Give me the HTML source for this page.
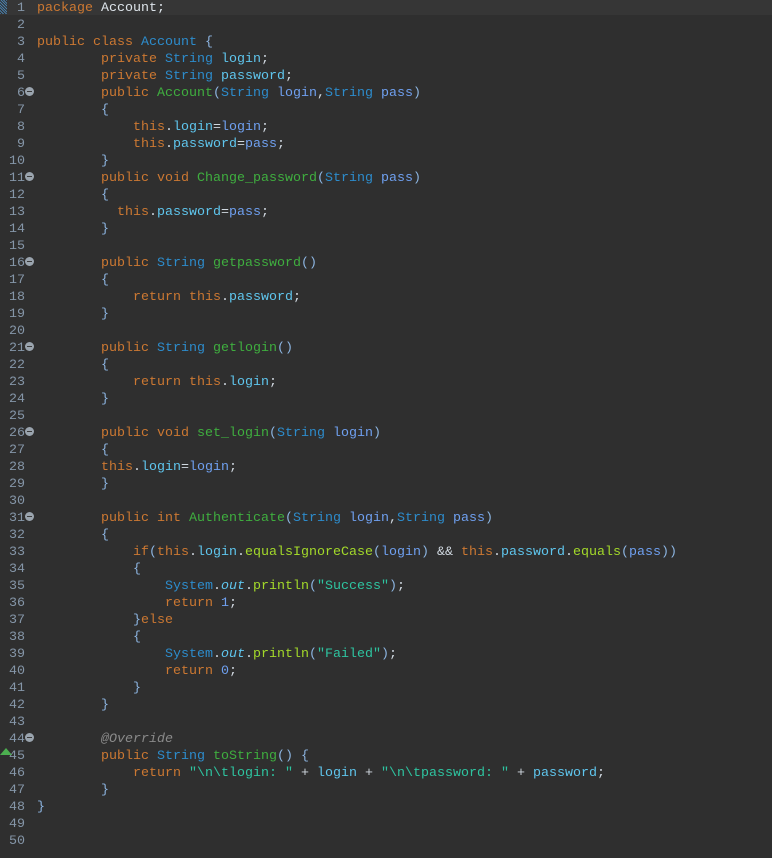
<!DOCTYPE html>
<html><head><meta charset="utf-8"><style>
html,body{margin:0;padding:0;background:#2f2f2f;width:772px;height:858px;overflow:hidden}
.hl{position:absolute;left:0;top:0;width:772px;height:15px;background:#363636}
pre{position:absolute;margin:0;top:0;font-family:"Liberation Mono",monospace;font-size:13.33px;line-height:17px;}
#nums{left:0;width:25px;text-align:right;color:#8596a8}
#code{left:37px;color:#d0d8e0}
.k{color:#cc7832}.t{color:#2d8ccc}.f{color:#5fc6ee}.m{color:#3fae3f}.c{color:#a3d92a}.s{color:#2ec4a0}.v{color:#6fa0f0}.p{color:#8cb4e0}.a{color:#8a8a8a;font-style:italic}.w{color:#dde4ea}.o{font-style:italic;color:#5fc6ee}
.fold{position:absolute;left:25px;width:9px;height:9px;border-radius:50%;background:#9aa4ae}
.fold:after{content:"";position:absolute;left:2px;top:4px;width:5px;height:1px;background:#3a3a3a}
.mk{position:absolute;left:0;top:748px;width:0;height:0;border-left:6px solid transparent;border-right:6px solid transparent;border-bottom:7px solid #4caf50}
.sq{position:absolute;left:0;top:0;width:7px;height:14px;background:repeating-linear-gradient(45deg,#4a7ea8 0 1px,#2f2f2f 1px 2px)}
</style></head><body>
<div class="hl"></div><div class="sq"></div>
<pre id="nums">1
2
3
4
5
6
7
8
9
10
11
12
13
14
15
16
17
18
19
20
21
22
23
24
25
26
27
28
29
30
31
32
33
34
35
36
37
38
39
40
41
42
43
44
45
46
47
48
49
50</pre>
<div class="fold" style="top:87px"></div>
<div class="fold" style="top:172px"></div>
<div class="fold" style="top:257px"></div>
<div class="fold" style="top:342px"></div>
<div class="fold" style="top:427px"></div>
<div class="fold" style="top:512px"></div>
<div class="fold" style="top:733px"></div>
<div class="mk"></div>
<pre id="code"><span class="k">package</span> <span class="w">Account;</span>

<span class="k">public</span> <span class="k">class</span> <span class="t">Account</span> <span class="p">{</span>
        <span class="k">private</span> <span class="t">String</span> <span class="f">login</span>;
        <span class="k">private</span> <span class="t">String</span> <span class="f">password</span>;
        <span class="k">public</span> <span class="m">Account</span><span class="p">(</span><span class="t">String</span> <span class="v">login</span>,<span class="t">String</span> <span class="v">pass</span><span class="p">)</span>
        <span class="p">{</span>
            <span class="k">this</span>.<span class="f">login</span>=<span class="v">login</span>;
            <span class="k">this</span>.<span class="f">password</span>=<span class="v">pass</span>;
        <span class="p">}</span>
        <span class="k">public</span> <span class="k">void</span> <span class="m">Change_password</span><span class="p">(</span><span class="t">String</span> <span class="v">pass</span><span class="p">)</span>
        <span class="p">{</span>
          <span class="k">this</span>.<span class="f">password</span>=<span class="v">pass</span>;
        <span class="p">}</span>

        <span class="k">public</span> <span class="t">String</span> <span class="m">getpassword</span><span class="p">()</span>
        <span class="p">{</span>
            <span class="k">return</span> <span class="k">this</span>.<span class="f">password</span>;
        <span class="p">}</span>

        <span class="k">public</span> <span class="t">String</span> <span class="m">getlogin</span><span class="p">()</span>
        <span class="p">{</span>
            <span class="k">return</span> <span class="k">this</span>.<span class="f">login</span>;
        <span class="p">}</span>

        <span class="k">public</span> <span class="k">void</span> <span class="m">set_login</span><span class="p">(</span><span class="t">String</span> <span class="v">login</span><span class="p">)</span>
        <span class="p">{</span>
        <span class="k">this</span>.<span class="f">login</span>=<span class="v">login</span>;
        <span class="p">}</span>

        <span class="k">public</span> <span class="k">int</span> <span class="m">Authenticate</span><span class="p">(</span><span class="t">String</span> <span class="v">login</span>,<span class="t">String</span> <span class="v">pass</span><span class="p">)</span>
        <span class="p">{</span>
            <span class="k">if</span><span class="p">(</span><span class="k">this</span>.<span class="f">login</span>.<span class="c">equalsIgnoreCase</span><span class="p">(</span><span class="v">login</span><span class="p">)</span> &amp;&amp; <span class="k">this</span>.<span class="f">password</span>.<span class="c">equals</span><span class="p">(</span><span class="v">pass</span><span class="p">))</span>
            <span class="p">{</span>
                <span class="t">System</span>.<span class="o">out</span>.<span class="c">println</span><span class="p">(</span><span class="s">"Success"</span><span class="p">)</span>;
                <span class="k">return</span> <span class="v">1</span>;
            <span class="p">}</span><span class="k">else</span>
            <span class="p">{</span>
                <span class="t">System</span>.<span class="o">out</span>.<span class="c">println</span><span class="p">(</span><span class="s">"Failed"</span><span class="p">)</span>;
                <span class="k">return</span> <span class="v">0</span>;
            <span class="p">}</span>
        <span class="p">}</span>

        <span class="a">@Override</span>
        <span class="k">public</span> <span class="t">String</span> <span class="m">toString</span><span class="p">()</span> <span class="p">{</span>
            <span class="k">return</span> <span class="s">"\n\tlogin: "</span> + <span class="f">login</span> + <span class="s">"\n\tpassword: "</span> + <span class="f">password</span>;
        <span class="p">}</span>
<span class="p">}</span>


</pre>
</body></html>
